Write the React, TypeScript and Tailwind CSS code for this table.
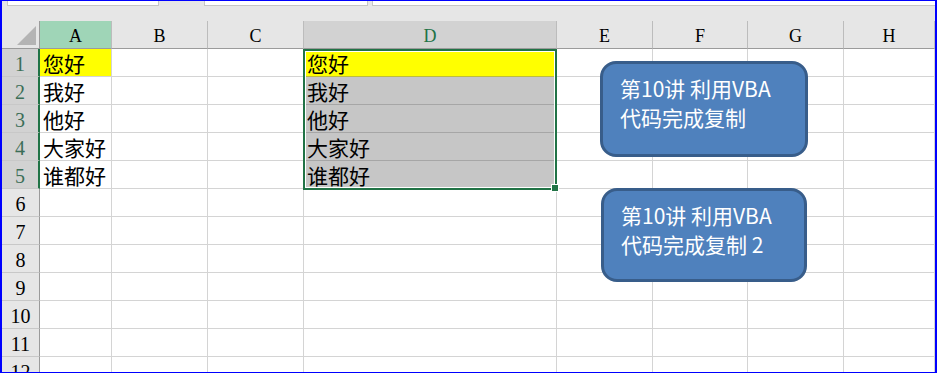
const cols = ['A', 'B', 'C', 'D', 'E', 'F', 'G', 'H'];
const words = ['您好', '我好', '他好', '大家好', '谁都好'];
const rows = Array.from({ length: 12 }, (_, i) => i + 1);

const serif = { fontFamily: '"Liberation Serif", "Times New Roman", serif' };
const cjk = { fontFamily: '"Noto Sans CJK SC", "Noto Sans", sans-serif' };

function Shape({ top, left, w, h, last }: { top: string; left: string; w: string; h: string; last: string }) {
  return (
    <div
      className={`absolute ${top} ${left} ${w} ${h} rounded-[16px] border-[3px] border-[#385d8a] bg-[#4f81bd] pl-[17px] pt-[10px] text-[21px] leading-[29px] text-white whitespace-nowrap`}
      style={cjk}
    >
      <div>第10讲 利用VBA</div>
      <div>{last}</div>
    </div>
  );
}

export default function App() {
  return (
    <div className="w-[937px] h-[373px] overflow-hidden border-t border-l-2 border-r-2 border-b border-[#0000ff] bg-[#e6e6e6]">
      <div className="relative w-full h-full">
        {/* formula bar remnants */}
        <div className="flex h-[20px] items-start pl-[5px]">
          <div className="w-[152px] h-[5px] bg-white border-x border-b border-[#c6c6c6]" />
          <div className="ml-[45px] w-[164px] h-[5px] bg-white border-x border-b border-[#c6c6c6]" />
          <div className="ml-[4px] flex-1 h-[5px] bg-white border-l border-b border-[#c6c6c6]" />
        </div>

        <div className="grid grid-cols-[38px_72px_96px_96px_253px_96px_95px_96px_1fr] auto-rows-[28px]">
          {/* header row */}
          <div className="relative border-b border-r border-[#9b9b9b]">
            <svg width="38" height="28" className="absolute inset-0">
              <polygon points="34,5 34,24 15,24" fill="#b4b4b4" />
            </svg>
          </div>
          {cols.map((c) => (
            <div
              key={c}
              className={`flex items-center justify-center pt-[3px] border-r border-r-[#bcbcbc] border-b border-b-[#9b9b9b] text-[18px] ${
                c === 'A' ? 'bg-[#9fd5b7] text-black' : c === 'D' ? 'bg-[#d2d2d2] text-[#217346]' : 'text-black'
              }`}
              style={serif}
            >
              {c}
            </div>
          ))}

          {rows.map((r) => (
            <div key={r} className="contents">
              <div
                className={`flex items-center justify-center pt-[3px] border-b border-[#c8c8c8] text-[20px] ${
                  r <= 5
                    ? 'bg-[#d2d2d2] text-[#3b6e57] border-r-2 border-r-[#217346]'
                    : 'text-black border-r border-r-[#9b9b9b]'
                }`}
                style={serif}
              >
                {r}
              </div>
              {cols.map((c) => {
                const text = r <= 5 && (c === 'A' || c === 'D') ? words[r - 1] : '';
                let bg = 'bg-white border-b-[#d4d4d4]';
                if (r === 1 && (c === 'A' || c === 'D')) bg = 'bg-[#ffff00] border-b-[#d4d4d4]';
                if (r === 1 && c === 'D') bg = 'bg-[#ffff00] border-b-[#bdbd3c]';
                if (r > 1 && r <= 5 && c === 'D') bg = 'bg-[#c6c6c6] border-b-[#a6a6a6]';
                return (
                  <div
                    key={c}
                    className={`border-r border-r-[#d4d4d4] border-b ${bg} pl-[3px] pt-[1px] text-[21px] leading-[27px] text-black whitespace-nowrap`}
                    style={cjk}
                  >
                    {text}
                  </div>
                );
              })}
            </div>
          ))}
        </div>

        {/* selection D1:D5 */}
        <div className="absolute left-[301px] top-[48px] w-[254px] h-[141px] border-2 border-[#217346]">
          <div className="w-full h-full border border-white" />
        </div>
        <div className="absolute left-[549px] top-[183px] w-[8px] h-[8px] bg-[#217346] border border-white" />

        <Shape top="top-[60px]" left="left-[598px]" w="w-[208px]" h="h-[96px]" last="代码完成复制" />
        <Shape top="top-[187px]" left="left-[599px]" w="w-[206px]" h="h-[94px]" last="代码完成复制 2" />
      </div>
    </div>
  );
}
